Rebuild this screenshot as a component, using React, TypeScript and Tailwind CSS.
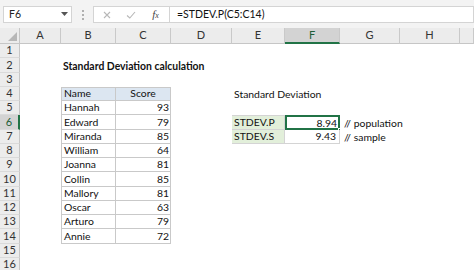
import React from "react";

const FONT = { fontFamily: "Lato, 'Liberation Sans', sans-serif" };

type CellSpec = {
  text?: string;
  bold?: boolean;
  align?: "left" | "right" | "center";
  textCls?: string;
  padCls?: string;
  overflow?: boolean;
};

const rowsData: Record<number, Record<string, CellSpec>> = {
  2: { B: { text: "Standard Deviation calculation", bold: true, overflow: true } },
  4: {
    B: { text: "Name" },
    C: { text: "Score", align: "center" },
    E: { text: "Standard Deviation", overflow: true },
  },
};

const people: [string, string][] = [
  ["Hannah", "93"],
  ["Edward", "79"],
  ["Miranda", "85"],
  ["William", "64"],
  ["Joanna", "81"],
  ["Collin", "85"],
  ["Mallory", "81"],
  ["Oscar", "63"],
  ["Arturo", "79"],
  ["Annie", "72"],
];

people.forEach(([n, s], i) => {
  const r = 5 + i;
  rowsData[r] = { ...(rowsData[r] || {}), B: { text: n }, C: { text: s, align: "right" } };
});

rowsData[6] = {
  ...rowsData[6],
  E: { text: "STDEV.P" },
  F: { text: "8.94", align: "right", padCls: "pr-[3px]" },
  G: { text: "// population", overflow: true, textCls: "text-[#9a9a9a]", padCls: "pl-[4px]" },
};
rowsData[7] = {
  ...rowsData[7],
  E: { text: "STDEV.S" },
  F: { text: "9.43", align: "right", padCls: "pr-[3px]" },
  G: { text: "// sample", overflow: true, textCls: "text-[#9a9a9a]", padCls: "pl-[4px]" },
};

const COLS = ["A", "B", "C", "D", "E", "F", "G", "H", "I"];

function cellClasses(r: number, c: string): string {
  const parts: string[] = [];
  if ((c === "B" || c === "C") && r >= 4 && r <= 14) {
    parts.push("border-r border-b border-[#c9c9c9]");
    if (c === "B") parts.push("border-l");
    if (r === 4) parts.push("border-t bg-[#dce6f1]");
  }
  if (c === "E" && (r === 6 || r === 7)) {
    parts.push("bg-[#e2efda] border-b border-r border-[#d4d4d4]");
    if (r === 6) parts.push("border-t");
  }
  if (c === "F" && r === 7) {
    parts.push("border-b border-r border-[#d4d4d4]");
  }
  return parts.join(" ");
}

function Cell({ r, c }: { r: number; c: string }) {
  const spec = rowsData[r]?.[c];
  const isSel = r === 6 && c === "F";
  const base = cellClasses(r, c);
  const align = spec?.align || "left";
  const justify =
    align === "right"
      ? `justify-end ${spec?.padCls || "pr-[1px]"}`
      : align === "center"
      ? "justify-center"
      : `justify-start ${spec?.padCls || "pl-[2px]"}`;
  return (
    <div
      className={`relative flex items-end pb-[1px] min-w-0 ${justify} ${base} ${
        spec?.overflow ? "overflow-visible z-10" : "overflow-hidden"
      }`}
    >
      {spec?.text && (
        <span
          className={`whitespace-nowrap text-[10.4px] leading-[12px] text-[#111] ${spec.bold ? "font-bold" : ""} ${
            spec.textCls || ""
          }`}
        >
          {spec.text}
        </span>
      )}
      {isSel && (
        <>
          <div className="absolute inset-0 border-2 border-[#217346] pointer-events-none" />
          <div className="absolute right-[-3px] bottom-[-3px] w-[5px] h-[5px] bg-[#217346] border border-white z-20" />
        </>
      )}
    </div>
  );
}

function Corner() {
  return (
    <div className="relative bg-[#ececec] border-r border-b border-[#c6c6c6]">
      <svg className="absolute right-[2px] bottom-[2px]" width="9" height="9" viewBox="0 0 9 9">
        <polygon points="9,0 9,9 0,9" fill="#b7b7b7" />
      </svg>
    </div>
  );
}

function ColHeader({ c }: { c: string }) {
  const sel = c === "F";
  return (
    <div
      className={`flex items-center justify-center text-[11px] border-r border-[#c9c9c9] ${
        sel
          ? "bg-[#d3d3d3] border-b-2 border-b-[#217346] text-[#1e5e37]"
          : "bg-[#ececec] border-b border-b-[#c6c6c6] text-[#333]"
      }`}
    >
      {c === "I" ? "" : c}
    </div>
  );
}

function RowHeader({ r }: { r: number }) {
  const sel = r === 6;
  return (
    <div
      className={`flex items-center justify-center text-[11px] border-b border-[#dadada] ${
        sel
          ? "bg-[#d3d3d3] border-r-2 border-r-[#217346] text-[#1e5e37]"
          : "bg-[#ececec] border-r border-r-[#c6c6c6] text-[#333]"
      }`}
    >
      {r}
    </div>
  );
}

export default function App() {
  const rows = Array.from({ length: 16 }, (_, i) => i + 1);
  return (
    <div className="w-[474px] h-[270px] overflow-hidden bg-white" style={FONT}>
      {/* Formula toolbar */}
      <div className="h-[28px] bg-[#f3f3f3] flex items-start pt-[6px]">
        <div className="ml-[3px] w-[69px] h-[17px] bg-white border border-[#d4d4d4] flex items-center pl-[5px] pr-[3px] justify-between">
          <span className="text-[10.5px] text-[#222]">F6</span>
          <svg width="7" height="5" viewBox="0 0 7 5">
            <polygon points="0,0 7,0 3.5,4" fill="#555" />
          </svg>
        </div>
        <div className="w-[21px] h-[17px] flex flex-col items-center justify-center gap-[2px]">
          <div className="w-[2px] h-[2px] bg-[#b0b0b0]" />
          <div className="w-[2px] h-[2px] bg-[#b0b0b0]" />
          <div className="w-[2px] h-[2px] bg-[#b0b0b0]" />
        </div>
        <div className="w-[77px] h-[17px] bg-white border border-[#d4d4d4] flex items-center">
          <div className="w-[26px] flex justify-center">
            <svg width="8" height="8" viewBox="0 0 8 8">
              <path d="M1 1 L7 7 M7 1 L1 7" stroke="#b8b8b8" strokeWidth="1.1" fill="none" />
            </svg>
          </div>
          <div className="w-[22px] flex justify-center">
            <svg width="10" height="8" viewBox="0 0 10 8">
              <path d="M1 4.5 L3.8 7 L9 1" stroke="#b8b8b8" strokeWidth="1.1" fill="none" />
            </svg>
          </div>
          <div className="flex-1 flex justify-center">
            <span
              className="italic text-[11px] text-[#444] leading-none"
              style={{ fontFamily: "'Liberation Serif', serif" }}
            >
              f<span className="text-[8px]">x</span>
            </span>
          </div>
        </div>
        <div className="flex-1 h-[17px] bg-white border border-l-0 border-[#d4d4d4] flex items-center pl-[7px]">
          <span className="text-[10.5px] text-[#111]">=STDEV.P(C5:C14)</span>
        </div>
      </div>

      {/* Grid */}
      <div className="grid grid-cols-[20px_41px_55px_55px_61px_53px_55px_60px_60px_1fr] grid-rows-[16px] auto-rows-[14.25px]">
        <Corner />
        {COLS.map((c) => (
          <ColHeader key={c} c={c} />
        ))}
        {rows.map((r) => (
          <React.Fragment key={r}>
            <RowHeader r={r} />
            {COLS.map((c) => (
              <Cell key={c} r={r} c={c} />
            ))}
          </React.Fragment>
        ))}
      </div>
    </div>
  );
}
